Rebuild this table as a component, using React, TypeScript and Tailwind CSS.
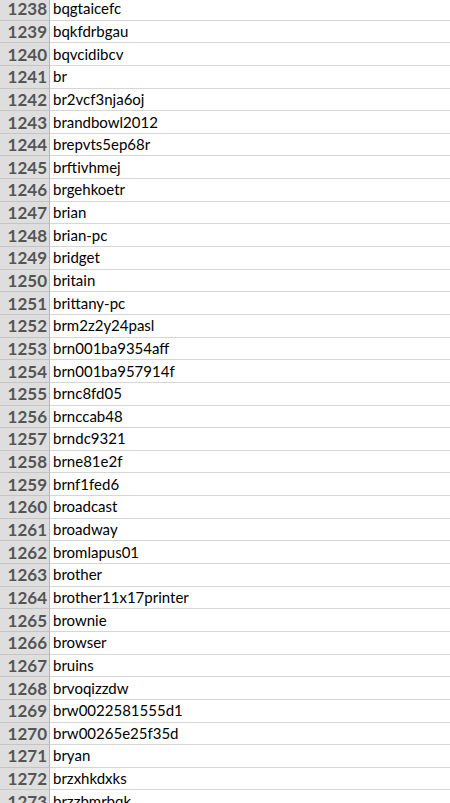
const rows: [number, string][] = [
  [1238, "bqgtaicefc"],
  [1239, "bqkfdrbgau"],
  [1240, "bqvcidibcv"],
  [1241, "br"],
  [1242, "br2vcf3nja6oj"],
  [1243, "brandbowl2012"],
  [1244, "brepvts5ep68r"],
  [1245, "brftivhmej"],
  [1246, "brgehkoetr"],
  [1247, "brian"],
  [1248, "brian-pc"],
  [1249, "bridget"],
  [1250, "britain"],
  [1251, "brittany-pc"],
  [1252, "brm2z2y24pasl"],
  [1253, "brn001ba9354aff"],
  [1254, "brn001ba957914f"],
  [1255, "brnc8fd05"],
  [1256, "brnccab48"],
  [1257, "brndc9321"],
  [1258, "brne81e2f"],
  [1259, "brnf1fed6"],
  [1260, "broadcast"],
  [1261, "broadway"],
  [1262, "bromlapus01"],
  [1263, "brother"],
  [1264, "brother11x17printer"],
  [1265, "brownie"],
  [1266, "browser"],
  [1267, "bruins"],
  [1268, "brvoqizzdw"],
  [1269, "brw0022581555d1"],
  [1270, "brw00265e25f35d"],
  [1271, "bryan"],
  [1272, "brzxhkdxks"],
  [1273, "brzzbmrbqk"],
];

export default function App() {
  return (
    <div className="h-[803px] w-[450px] overflow-hidden bg-white font-['Lato','Liberation_Sans',sans-serif]">
      {/* sheet rows, first one scrolled partly out of view */}
      <div className="-mt-[2px] flex flex-col">
        {rows.map(([n, name]) => (
          <div key={n} className="flex h-[22.65px] shrink-0">
            <div className="flex w-[50px] shrink-0 items-center justify-end border-b border-r border-b-[#c4c4c4] border-r-[#b5b5b5] bg-[#dedede] pr-[2px] text-[17px] font-bold leading-none text-[#555555]">
              {n}
            </div>
            <div className="flex flex-1 items-center border-b border-[#d6d6d6] pl-[3px] text-[15px] leading-none text-black">
              {name}
            </div>
          </div>
        ))}
      </div>
    </div>
  );
}
